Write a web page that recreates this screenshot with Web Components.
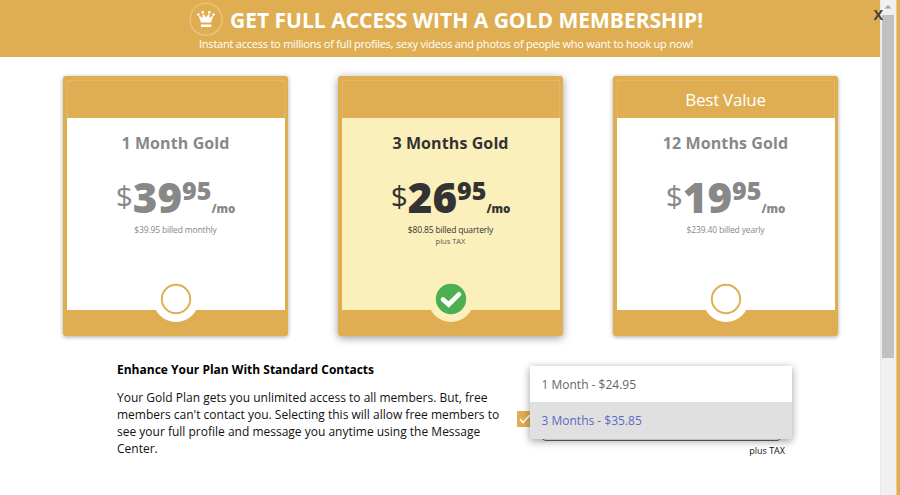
<!DOCTYPE html>
<html lang="en">
<head>
<meta charset="utf-8">
<title>Gold Membership</title>
<style>
body {
  margin: 0;
  overflow: hidden;
  background: #fff;
  font-family: "Open Sans", sans-serif;
}
</style>
</head>
<body>
<gold-page>
  <gold-header slot="header">
    <span slot="title">GET FULL ACCESS WITH A GOLD MEMBERSHIP!</span>
    <span slot="subtitle">Instant access to millions of full profiles, sexy videos and photos of people who want to hook up now!</span>
  </gold-header>
  <plan-card slot="plans" name="1 Month Gold" dollars="39" cents="95" billed="$39.95 billed monthly"></plan-card>
  <plan-card slot="plans" name="3 Months Gold" dollars="26" cents="95" billed="$80.85 billed quarterly" tax="plus TAX" selected></plan-card>
  <plan-card slot="plans" name="12 Months Gold" dollars="19" cents="95" billed="$239.40 billed yearly" ribbon="Best Value"></plan-card>
  <contacts-upsell slot="upsell">
    <span slot="heading">Enhance Your Plan With Standard Contacts</span>
    Your Gold Plan gets you unlimited access to all members. But, free<br>members can't contact you. Selecting this will allow free members to<br>see your full profile and message you anytime using the Message<br>Center.
    <option-menu slot="options"></option-menu>
  </contacts-upsell>
</gold-page>

<script>
const pageTemplate = document.createElement("template");
pageTemplate.innerHTML = `\
<style>
:host {
  display: flex;
  position: relative;
  width: 900px;
  height: 495px;
  overflow: hidden;
}
main {
  width: 880px;
}
.plans {
  display: flex;
  gap: 50px;
  padding: 19px 0 0 63px;
}
.scrollbar {
  box-sizing: border-box;
  width: 16px;
  background: #f0f0f0;
  border-left: 1px solid #e9e9e9;
  padding: 0 2px 0 1px;
}
.scrollbar svg {
  display: block;
  width: 12px;
  height: 15px;
}
.thumb {
  height: 343px;
  background: #c1c1c1;
}
.edge {
  box-sizing: border-box;
  width: 4px;
  background: #e0ae52;
  border-left: 1px solid #eccb90;
}
.close {
  position: absolute;
  left: 873.500px;
  top: 5px;
  font: bold 14.500px/20px "Open Sans", sans-serif;
  color: #444;
}
</style>
<main>
  <slot name="header"></slot>
  <div class="plans"><slot name="plans"></slot></div>
  <slot name="upsell"></slot>
</main>
<div class="scrollbar">
  <svg viewBox="0 0 12 15"><path d="M2.500 8.500 6 5l3.500 3.500z" fill="#a3a3a3"/></svg>
  <div class="thumb"></div>
</div>
<div class="edge"></div>
<div class="close">X</div>
`;

class GoldPage extends HTMLElement {
    constructor() {
        super();
        this.attachShadow({ mode: "open" });
        this.shadowRoot.appendChild(pageTemplate.content.cloneNode(true));
    }
}

const headerTemplate = document.createElement("template");
headerTemplate.innerHTML = `\
<style>
:host {
  display: block;
  height: 57px;
  background: #e0ae52;
  color: #fff;
}
.row {
  display: flex;
  height: 37px;
  padding: 2px 0 0 189px;
}
svg {
  width: 34px;
  height: 34px;
}
.title {
  margin: 4px 0 0 7px;
  font-size: 21px;
  line-height: 28px;
  font-weight: bold;
  white-space: nowrap;
}
.subtitle {
  margin-left: 199px;
  margin-top: -3px;
  font-size: 11px;
  line-height: 16px;
  letter-spacing: -.225px;
  white-space: nowrap;
}
</style>
<div class="row">
  <svg viewBox="0 0 34 34">
    <circle cx="17" cy="17.300" r="16" fill="none" stroke="#e9c37b" stroke-width="1.500"/>
    <path d="M23.500 23 28 27A15 15 0 0 0 32 14L26 11z" fill="#d7a54b" opacity=".5"/>
    <path d="M12 20.500 9.500 13l4 3 .3-5 3.200 4.500 3.200-4.500.3 5 4-3-2.500 7.500z" fill="#fff"/>
    <circle cx="9.300" cy="12.500" r="1.300" fill="#fff"/>
    <circle cx="13.700" cy="10.300" r="1.300" fill="#fff"/>
    <circle cx="20.300" cy="10.300" r="1.300" fill="#fff"/>
    <circle cx="24.700" cy="12.500" r="1.300" fill="#fff"/>
    <path d="M12 22.500h10.300v2.500H12z" fill="#fff"/>
  </svg>
  <div class="title"><slot name="title"></slot></div>
</div>
<div class="subtitle"><slot name="subtitle"></slot></div>
`;

class GoldHeader extends HTMLElement {
    constructor() {
        super();
        this.attachShadow({ mode: "open" });
        this.shadowRoot.appendChild(headerTemplate.content.cloneNode(true));
    }
}

const cardTemplate = document.createElement("template");
cardTemplate.innerHTML = `\
<style>
:host {
  --paper: #fff;
  display: block;
  box-sizing: border-box;
  width: 225px;
  height: 260px;
  padding: 4px 3.500px 0;
  border-radius: 3px;
  background: #e0ae52;
  box-shadow: 0 1px 4px rgba(0, 0, 0, .35);
  color: #888;
  text-align: center;
}
:host([selected]) {
  --paper: #fbf0bc;
  color: #333;
  box-shadow: 0 2px 8px rgba(0, 0, 0, .4);
}
.ribbon {
  box-sizing: border-box;
  height: 38px;
  border: 1px solid #e5b865;
  border-bottom: none;
  color: #fff;
  font-size: 17px;
  line-height: 38px;
  letter-spacing: -.25px;
}
.body {
  box-sizing: border-box;
  display: flex;
  flex-direction: column;
  align-items: center;
  height: 192px;
  padding-top: 14px;
  background: var(--paper);
}
.name {
  font-size: 16px;
  line-height: 22px;
  font-weight: bold;
  letter-spacing: .1px;
}
.price {
  display: flex;
  align-items: flex-start;
  height: 48px;
  margin-top: 18px;
}
.sign {
  font-size: 30px;
  line-height: 44px;
  margin-top: 2px;
}
.dollars {
  font-size: 42px;
  line-height: 50px;
  font-weight: 800;
}
.cents {
  font-size: 25px;
  line-height: 34px;
  font-weight: 800;
  margin-top: 1px;
}
.mo {
  font-size: 11.500px;
  line-height: 16px;
  font-weight: 800;
  margin-top: 29px;
}
.billed {
  font-size: 8.500px;
  line-height: 12px;
  margin-top: 4px;
  letter-spacing: -.15px;
}
.tax {
  font-size: 7.500px;
  line-height: 11px;
  opacity: .8;
}
.pick {
  display: grid;
  place-items: center;
  width: 46px;
  height: 46px;
  margin: -34.500px auto 0;
  border-radius: 50%;
  background: var(--paper);
}
.pick svg {
  width: 32px;
  height: 32px;
}
.on, :host([selected]) .off {
  display: none;
}
:host([selected]) .on {
  display: block;
}
</style>
<div class="ribbon"></div>
<div class="body">
  <div class="name"></div>
  <div class="price">
    <span class="sign">$</span><span class="dollars"></span><span class="cents"></span><span class="mo">/mo</span>
  </div>
  <div class="billed"></div>
  <div class="tax"></div>
</div>
<div class="pick">
  <svg class="off" viewBox="0 0 32 32"><circle cx="16" cy="16" r="14.200" fill="none" stroke="#e0ae52" stroke-width="1.900"/></svg>
  <svg class="on" viewBox="0 0 32 32"><circle cx="16" cy="16" r="15.200" fill="#4caf50"/><path d="m8 16.500 5.700 5L24 11.300" fill="none" stroke="#fff" stroke-width="4.600" stroke-linecap="round"/></svg>
</div>
`;

class PlanCard extends HTMLElement {
    constructor() {
        super();
        this.attachShadow({ mode: "open" });
        this.shadowRoot.appendChild(cardTemplate.content.cloneNode(true));
    }

    connectedCallback() {
        ["ribbon", "name", "dollars", "cents", "billed", "tax"].forEach((field) => {
            this.shadowRoot.querySelector("." + field).textContent = this.getAttribute(field) || "";
        });
        this.addEventListener("click", () => {
            document.querySelectorAll("plan-card").forEach((card) => {
                card.toggleAttribute("selected", card === this);
            });
        });
    }
}

const upsellTemplate = document.createElement("template");
upsellTemplate.innerHTML = `\
<style>
:host {
  display: flex;
  padding: 25px 0 0 117px;
  color: #111;
}
.text {
  width: 400px;
}
.heading {
  font-size: 12px;
  line-height: 18px;
  font-weight: bold;
  color: #000;
}
.copy {
  margin-top: 10px;
  font-size: 12px;
  line-height: 17px;
  white-space: nowrap;
}
.check {
  width: 14px;
  height: 16px;
  margin-top: 50px;
}
.choice {
  position: relative;
  width: 270px;
}
.field {
  box-sizing: border-box;
  width: 241px;
  height: 36px;
  margin: 44px 0 0 10px;
  border: 1px solid #666;
  border-radius: 5px;
}
.tax {
  width: 254px;
  margin-top: 3px;
  font-size: 9px;
  line-height: 14px;
  text-align: right;
}
slot[name="options"] {
  display: block;
  position: absolute;
  left: -1.500px;
  top: 5px;
}
</style>
<div class="text">
  <div class="heading"><slot name="heading"></slot></div>
  <div class="copy"><slot></slot></div>
</div>
<svg class="check" viewBox="0 0 14 16"><rect width="16" height="16" rx="1" fill="#e0ae52"/><path d="m3 8 3 3.500L13 4" fill="none" stroke="#fff" stroke-width="1.700"/></svg>
<div class="choice">
  <div class="field"></div>
  <div class="tax">plus TAX</div>
  <slot name="options"></slot>
</div>
`;

class ContactsUpsell extends HTMLElement {
    constructor() {
        super();
        this.attachShadow({ mode: "open" });
        this.shadowRoot.appendChild(upsellTemplate.content.cloneNode(true));
    }
}

const menuTemplate = document.createElement("template");
menuTemplate.innerHTML = `\
<style>
:host {
  display: block;
  width: 262px;
  background: #fff;
  box-shadow: 0 2px 8px rgba(0, 0, 0, .4);
  font-size: 12px;
  color: #666;
}
.option {
  padding-left: 12px;
  height: 36px;
  line-height: 37px;
}
.option.active {
  height: 37px;
  background: #e0e0e0;
  color: #5c6bc0;
}
</style>
<div class="option">1 Month - $24.95</div>
<div class="option active">3 Months - $35.85</div>
`;

class OptionMenu extends HTMLElement {
    constructor() {
        super();
        this.attachShadow({ mode: "open" });
        this.shadowRoot.appendChild(menuTemplate.content.cloneNode(true));
        this.options = this.shadowRoot.querySelectorAll(".option");

        this.options.forEach((option) => {
            option.addEventListener("click", () => {
                this.options.forEach((o) => o.classList.toggle("active", o === option));
            });
        });
    }
}

customElements.define("gold-page", GoldPage);
customElements.define("gold-header", GoldHeader);
customElements.define("plan-card", PlanCard);
customElements.define("contacts-upsell", ContactsUpsell);
customElements.define("option-menu", OptionMenu);
</script>
</body>
</html>
